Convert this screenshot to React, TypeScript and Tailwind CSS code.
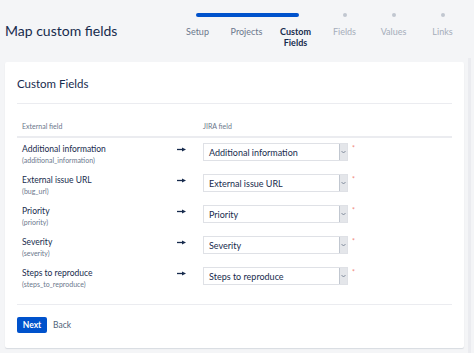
const steps = [
  { label: "Setup", state: "done" },
  { label: "Projects", state: "done" },
  { label: "Custom Fields", state: "current" },
  { label: "Fields", state: "todo" },
  { label: "Values", state: "todo" },
  { label: "Links", state: "todo" },
];

const rows = [
  { name: "Additional information", key: "additional_information", value: "Additional information" },
  { name: "External issue URL", key: "bug_url", value: "External issue URL" },
  { name: "Priority", key: "priority", value: "Priority" },
  { name: "Severity", key: "severity", value: "Severity" },
  { name: "Steps to reproduce", key: "steps_to_reproduce", value: "Steps to reproduce" },
];

function Stepper() {
  return (
    <div className="relative flex w-[295px] pt-[13px]">
      <div className="absolute left-[23px] top-[13px] h-[4px] w-[103px] rounded-full bg-[#0052cc]" />
      {steps.map((s) => (
        <div key={s.label} className="flex w-[49px] flex-col items-center">
          <div className="flex h-[4px] items-center">
            {s.state === "todo" && <div className="h-[4px] w-[4px] rounded-full bg-[#c1c7d0]" />}
          </div>
          <div
            className={
              "mt-[9px] text-center text-[9px] leading-[11px] " +
              (s.state === "current"
                ? "w-[32px] font-bold text-[#172b4d]"
                : s.state === "done"
                ? "text-[#6b778c]"
                : "text-[#a5adba]")
            }
          >
            {s.label}
          </div>
        </div>
      ))}
    </div>
  );
}

function Arrow() {
  return (
    <svg width="9" height="5" viewBox="0 0 9 5" className="mt-[4px]">
      <path d="M0 2.5 H6" stroke="#172b4d" strokeWidth="1.3" />
      <path d="M5 0.5 L9 2.5 L5 4.5 Z" fill="#172b4d" />
    </svg>
  );
}

function Select({ value }: { value: string }) {
  return (
    <div className="flex h-[18px] w-[145px] border border-[#dfe1e6] bg-white">
      <div className="flex-1 truncate pl-[5px] pt-[3px] text-[9px] leading-[12px] text-[#172b4d]">{value}</div>
      <div className="flex w-[8px] items-center justify-center border-l border-[#c1c7d0] bg-[#e4e6ea]">
        <svg width="5" height="4" viewBox="0 0 5 4">
          <path d="M0.5 1 L2.5 3 L4.5 1" fill="none" stroke="#6b778c" strokeWidth="0.8" />
        </svg>
      </div>
    </div>
  );
}

export default function App() {
  return (
    <div className="relative h-[353px] w-[474px] overflow-hidden bg-[#f4f5f7] font-['Lato',sans-serif]">
      <div className="flex h-[62px] pl-[5px] pr-[6px]">
        <h1 className="pt-[21px] text-[14px] leading-[20px] text-[#172b4d]">Map custom fields</h1>
        <div className="ml-auto">
          <Stepper />
        </div>
      </div>
      <div className="ml-[5px] w-[459px] rounded-[2px] bg-white px-[12px] shadow-[0_1px_1px_rgba(9,30,66,0.12)]">
        <h2 className="pt-[13px] pb-[10px] text-[11.5px] leading-[18px] text-[#172b4d]">Custom Fields</h2>
        <div className="h-[1px] bg-[#ebecf0]" />
        <div className="flex pt-[17px] pb-[5px] text-[7px] leading-[10px] text-[#6b778c]">
          <div className="w-[186px] pl-[5px]">External field</div>
          <div>JIRA field</div>
        </div>
        <div className="h-[2px] bg-[#ebecf0]" />
        <div className="flex flex-col pt-[5px]">
          {rows.map((r) => (
            <div key={r.key} className="flex h-[31px]">
              <div className="w-[157px] pl-[5px]">
                <div className="text-[8.5px] leading-[12px] text-[#172b4d]">{r.name}</div>
                <div className="text-[7px] leading-[10px] text-[#6b778c]">({r.key})</div>
              </div>
              <div className="w-[29px] pl-[3px]">
                <Arrow />
              </div>
              <Select value={r.value} />
              <div className="pl-[4px] text-[7px] leading-[10px] text-[#f08a7a]">*</div>
            </div>
          ))}
        </div>
        <div className="mt-[6px] h-[1px] bg-[#ebecf0]" />
        <div className="flex items-center gap-[6px] pt-[12px] pb-[15px]">
          <button className="h-[16px] w-[30px] rounded-[2px] bg-[#0052cc] text-[8.5px] font-bold text-white">Next</button>
          <button className="text-[8.5px] text-[#505f79]">Back</button>
        </div>
      </div>
      <div className="absolute right-[3px] top-[58px] h-[295px] w-[3px] bg-[#ebecf0]" />
    </div>
  );
}
